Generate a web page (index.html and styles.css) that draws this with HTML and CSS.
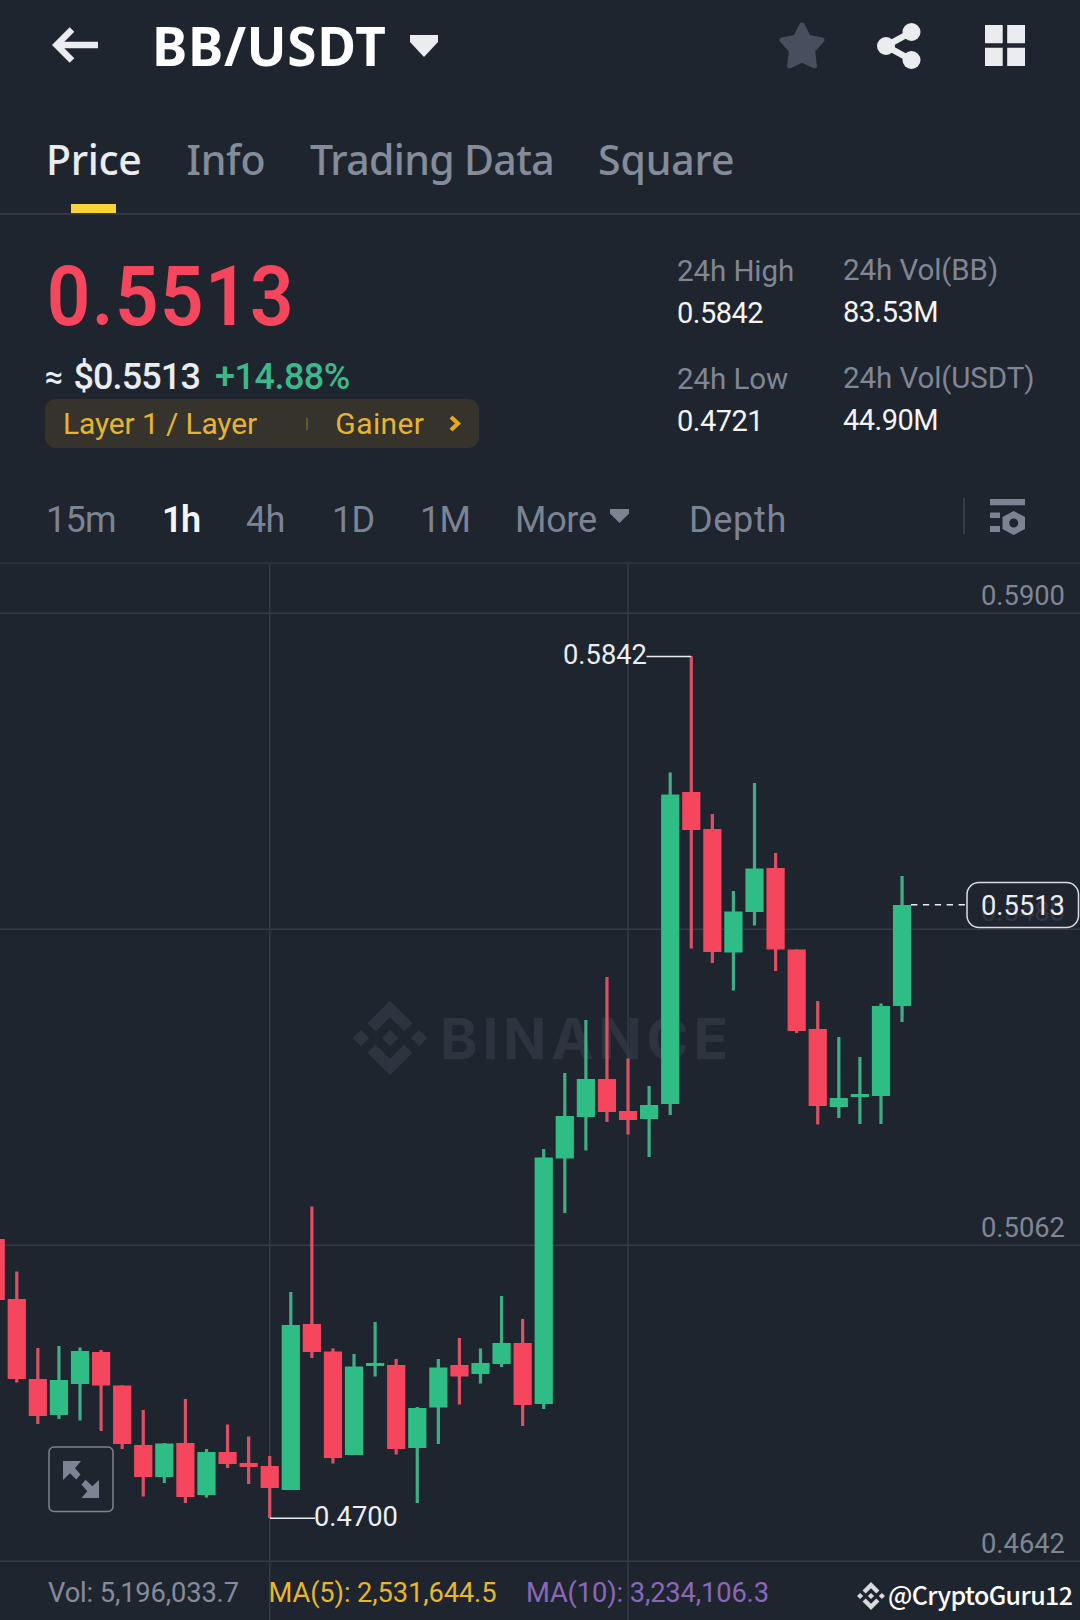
FILE: index.html
```html
<!DOCTYPE html>
<html lang="en">
<head>
<meta charset="utf-8">
<title>BB/USDT</title>
<link rel="stylesheet" href="styles.css">
</head>
<body>
<div class="app">
  <header class="header">
    <svg class="back" width="46" height="36" viewBox="0 0 46 36"><path d="M20 2.500L4.500 18L20 33.500M4.500 18H46" fill="none" stroke="#eaecef" stroke-width="6.500"/></svg>
    <h1 class="pair">BB/USDT</h1>
    <svg class="caret" width="28" height="22" viewBox="0 0 28 22"><path d="M0 0H28V7L14 22L0 7Z" fill="#eaecef"/></svg>
    <div class="actions">
      <svg width="46" height="48" viewBox="0 0 46 48"><path d="M23 3L29.500 15.500L43 18L33.500 28.500L35.500 44L23 38L10.500 44L12.500 28.500L3 18L16.500 15.500Z" fill="#474f5e" stroke="#474f5e" stroke-width="5" stroke-linejoin="round"/></svg>
      <svg width="44" height="48" viewBox="0 0 44 48"><path d="M34.500 10L9 24L34.500 38" fill="none" stroke="#eaecef" stroke-width="6.500"/><circle cx="34.500" cy="10" r="9"/><circle cx="9" cy="24" r="9"/><circle cx="34.500" cy="38" r="9"/></svg>
      <svg width="40" height="41" viewBox="0 0 40 41"><path d="M0 0H17.700V18.200H0ZM22.200 0H40V18.200H22.200ZM0 22.700H17.700V41H0ZM22.200 22.700H40V41H22.200Z"/></svg>
    </div>
  </header>

  <nav class="tabs">
    <span class="tab active">Price</span>
    <span class="tab info">Info</span>
    <span class="tab trading">Trading Data</span>
    <span class="tab square">Square</span>
  </nav>

  <section class="summary">
    <div class="quote">
      <div class="last">0.5513</div>
      <div class="fiat"><span class="approx">≈</span><span class="usd">$0.5513</span><span class="change">+14.88%</span></div>
      <div class="pill">
        <span class="tag layer">Layer 1 / Layer</span><i class="sep"></i><span class="tag gainer">Gainer</span>
        <svg width="12" height="17" viewBox="0 0 12 17"><path d="M2 2L9 8.500L2 15" fill="none" stroke="#e5a91c" stroke-width="4.200"/></svg>
      </div>
    </div>
    <dl class="stats">
      <div><dt>24h High</dt><dd>0.5842</dd></div>
      <div class="vol"><dt class="bb">24h Vol(BB)</dt><dd>83.53M</dd></div>
      <div><dt>24h Low</dt><dd>0.4721</dd></div>
      <div class="vol"><dt class="usdt">24h Vol(USDT)</dt><dd>44.90M</dd></div>
    </dl>
  </section>

  <nav class="intervals">
    <span>15m</span>
    <span class="active">1h</span>
    <span>4h</span>
    <span>1D</span>
    <span>1M</span>
    <span class="more">More<svg width="19" height="14" viewBox="0 0 19 14"><path d="M0 0H19V4.500L9.500 14L0 4.500Z" fill="#7c8494"/></svg></span>
    <span class="depth">Depth</span>
    <i class="rule"></i>
    <svg class="settings" width="35" height="37" viewBox="0 0 35 37"><path d="M0 0H35V6.300H0ZM0 13.500H10V19H0ZM0 27H10V33H0Z"/><path fill-rule="evenodd" d="M23.700 12L35 18V30L23.700 36L12.500 30V18ZM23.700 19.500A4.500 4.500 0 1 0 23.700 28.500A4.500 4.500 0 1 0 23.700 19.500Z"/></svg>
  </nav>

  <main class="chart">
    <svg id="plot" width="1080" height="1056" viewBox="0 564 1080 1056">
      <g class="mark">
        <path transform="translate(390 1038) scale(.592)" d="M-38 -25L0 -63L38 -25L24 -11L0 -35L-24 -11ZM0 -14L14 0L0 14L-14 0ZM-49 -14L-35 0L-49 14L-63 0ZM49 -14L63 0L49 14L35 0ZM-38 25L-24 11L0 35L24 11L38 25L0 63Z"/>
        <text class="brand" x="440" y="1059" textLength="288">BINANCE</text>
      </g>
      <g class="grid">
        <path d="M269.700 564V1620M628 564V1620"/>
        <path d="M0 613.300H1080M0 929.300H1080M0 1245.300H1080M0 1561.300H1080"/>
      </g>
      <g id="candles"></g>
      <g class="leader">
        <path d="M646.500 656.500H691M270 1518.300H315"/>
        <path d="M911 904.700H966" stroke-dasharray="6.300 5.600"/>
      </g>
      <g class="axis">
        <text x="981" y="605">0.5900</text>
        <text x="981" y="1237">0.5062</text>
        <text x="981" y="1553">0.4642</text>
      </g>
      <text class="ghost" x="981" y="921">0.5480</text>
      <rect class="box" x="967" y="882.500" width="111.500" height="45" rx="12"/>
      <g class="value">
        <text x="981" y="915">0.5513</text>
        <text x="563" y="664">0.5842</text>
        <text x="314" y="1526">0.4700</text>
      </g>
      <g class="volume">
        <text x="48" y="1602" textLength="191" fill="#858c9a">Vol: 5,196,033.7</text>
        <text x="268.500" y="1602" textLength="228" fill="#e6b62d">MA(5): 2,531,644.5</text>
        <text x="526" y="1602" textLength="243" fill="#8a68b8">MA(10): 3,234,106.3</text>
      </g>
      <g class="expand">
        <rect x="49" y="1447" width="64" height="64.500" rx="5"/>
        <path d="M63 1461H81L75 1468.300L80.500 1474.500L76.300 1479.500L70 1473.300L63 1480ZM99 1498H81.500L87.300 1491.300L81.500 1484.500L85.700 1479.700L92.300 1486.300L99 1480Z"/>
      </g>
      <g transform="translate(871 1596) scale(.222)" fill="#d9dadc"><path d="M-38 -25L0 -63L38 -25L24 -11L0 -35L-24 -11ZM0 -14L14 0L0 14L-14 0ZM-49 -14L-35 0L-49 14L-63 0ZM49 -14L63 0L49 14L35 0ZM-38 25L-24 11L0 35L24 11L38 25L0 63Z"/></g>
      <text class="user" x="888" y="1605" textLength="185">@CryptoGuru12</text>
    </svg>
  </main>
</div>
<script src="chart.js"></script>
</body>
</html>
```
FILE: styles.css
```css
* { box-sizing: border-box; }
body {
  margin: 0;
  background: #1f252f;
  color: #eaecef;
  font-family: "Roboto", "Liberation Sans", sans-serif;
}
.app { width: 1080px; height: 1620px; overflow: hidden; display: flex; flex-direction: column; }
svg { display: block; flex: none; }
span, h1, dt, dd { white-space: nowrap; }

.header { height: 94px; display: flex; align-items: center; padding: 0 55px 0 52px; }
.back { margin-top: -4px; }
.pair { margin: 0 0 0 54px; width: 258px; font: 700 53px/91px "Noto Sans", sans-serif; letter-spacing: .700px; margin-top: -3px; color: #fff; }
.caret { margin-top: -3px; }
.actions { margin-left: auto; display: flex; align-items: center; gap: 52px; margin-top: -3px; fill: #eaecef; }
.actions svg:last-child { margin-left: 12px; }

.tabs {
  height: 121px;
  border-bottom: 2px solid #323843;
  display: grid;
  grid-template-columns: 140.500px 123.500px 288px 200px;
  padding: 8px 0 0 46px;
  font: 500 41px/114px "Noto Sans", sans-serif;
  letter-spacing: -.300px;
  color: #848b99;
}
.trading { letter-spacing: -.650px; }
.square { letter-spacing: -.150px; }
.tab.active { color: #eaecef; position: relative; }
.tab.active::after { content: ""; position: absolute; left: 25px; bottom: 3px; width: 45px; height: 9px; background: #f8d33a; }

.summary { height: 255px; display: flex; justify-content: space-between; padding: 0 1px 0 45px; }
.quote { padding-top: 35px; }
.last { height: 94px; line-height: 94px; font-size: 83px; font-weight: 600; color: #f6465d; letter-spacing: 1.500px; transform: scaleX(.92); transform-origin: 0 50%; text-indent: 2px; }
.fiat { height: 55px; line-height: 67px; display: flex; font-size: 36px; font-weight: 500; letter-spacing: -.900px; }
.approx { width: 28.500px; font-size: 32px; }
.usd { width: 141.500px; }
.change { color: #3cb98a; letter-spacing: -.500px; }
.pill {
  width: 434px; height: 49px; border-radius: 11px; background: #35332c; color: #e4b432;
  display: flex; align-items: center; padding: 0 18px; font-size: 30px;
}
.layer { width: 244px; letter-spacing: -.150px; }
.sep { width: 2px; height: 12px; background: #6b5623; margin-right: 27px; }
.gainer { width: 114px; letter-spacing: .400px; }
.stats { margin: 0; padding-top: 35px; width: 402px; display: grid; grid-template-columns: 166px 1fr; grid-auto-rows: 108px; font-size: 29.500px; }
.stats dt { line-height: 42px; color: #7f8694; letter-spacing: -.080px; }
.stats dd { margin: 0; line-height: 43px; font-size: 29px; letter-spacing: -.500px; color: #f3f4f6; }
.vol { margin-top: -1px; }

.intervals {
  height: 94px;
  border-bottom: 2px solid #2b323c;
  display: grid;
  grid-template-columns: 116px 84px 86px 88px 95px 174px 274px 27px 35px;
  padding: 6px 0 0 46px;
  font-size: 36px;
  line-height: 89px;
  letter-spacing: -.700px;
  color: #7c8494;
}
.intervals .active { color: #f5f6f8; font-weight: 600; letter-spacing: -1.500px; }
.more { display: flex; gap: 13px; letter-spacing: -.300px; }
.depth { letter-spacing: .700px; }
.more svg { margin-top: 33px; }
.rule { width: 2px; height: 36px; margin-top: 22px; background: #363d49; }
.settings { margin-top: 23px; fill: #7c8494; }

.chart { flex: 1; }
.chart text { font-family: "Roboto", sans-serif; font-size: 27.300px; }
.mark { fill: #2e343f; }
.chart .brand { font: 700 57px "Inter", sans-serif; }
.grid path { stroke: #343b46; stroke-width: 1.500; }
.leader path { stroke: #eaecef; stroke-width: 1.500; fill: none; }
.axis { fill: #7f8694; }
.value { fill: #eceef2; }
.chart .ghost { fill: #464e5c; }
.box { fill: #1f252f; fill-opacity: .55; stroke: #d9dce2; stroke-width: 1.500; }
.expand rect { fill: #1f252f; stroke: #7c8494; stroke-width: 1.500; }
.expand path { fill: #7c8494; }
.chart .user { font: 500 25px "Noto Sans CJK SC", sans-serif; fill: #fff; }
.up { fill: #2ebd85; }
.down { fill: #f6465d; }
.up .wick { fill: #40ae85; }
.down .wick { fill: #dc5064; }
```
FILE: chart.js
```js
// Each candle: direction, wick top, wick bottom, body top, body bottom.
const candles = [
  ['d',1239,1300,1239,1300],['d',1271.5,1382.5,1299,1379],['d',1348,1424,1379,1416],['u',1346,1419,1380,1415],
  ['u',1347.5,1420.5,1351,1384],['d',1350,1431,1352,1385.5],['d',1385.5,1449,1385.5,1444],['d',1410,1496.5,1445,1477],
  ['u',1443,1483,1443.5,1477],['d',1399,1503,1443,1497],['u',1449,1497.5,1452,1495],['d',1424.5,1468,1452,1464],
  ['d',1436.5,1484,1463,1467],['d',1456,1518,1466,1488],['u',1292,1490,1325,1490],['d',1206.5,1358,1324,1352],
  ['d',1348.5,1463.5,1351.5,1458],['u',1354,1455,1366.5,1455],['u',1322,1376.5,1363,1366],['d',1359,1454.5,1365,1449],
  ['u',1407,1503,1408,1448],['u',1359,1444,1367.5,1407.5],['d',1338,1404.5,1365,1376.5],['u',1348.5,1383.5,1363,1374],
  ['u',1296,1367,1343,1364],['d',1319,1426,1343,1405],['u',1149,1409,1157.5,1404],['u',1073,1213,1116,1158.5],
  ['u',1020,1150.5,1079,1117],['d',977,1122,1079,1112],['d',1058.5,1134.5,1111,1120],['u',1086,1157,1105,1119],
  ['u',772.5,1115,794.5,1104],['d',656,948.5,792,830],['d',814,963,829,952],['u',891,990.5,911.5,952.5],
  ['u',783,925.5,868.5,912],['d',853,971,868,949.5],['d',949.5,1033,949.5,1031],['d',1001,1124.5,1029,1106],
  ['u',1037,1118,1098,1107],['u',1057,1124,1094,1097],['u',1003.5,1124,1006,1096],['u',876,1022,905,1006]
];
document.getElementById('candles').innerHTML = candles.map(([dir, hi, lo, top, bottom], i) => {
  const x = -4.3 + i * 21.078;
  return `<g class="${dir === 'u' ? 'up' : 'down'}"><rect class="wick" x="${x - 1.6}" y="${hi}" width="3.2" height="${lo - hi}"/><rect x="${x - 9.1}" y="${top}" width="18.2" height="${bottom - top}"/></g>`;
}).join('');
```
